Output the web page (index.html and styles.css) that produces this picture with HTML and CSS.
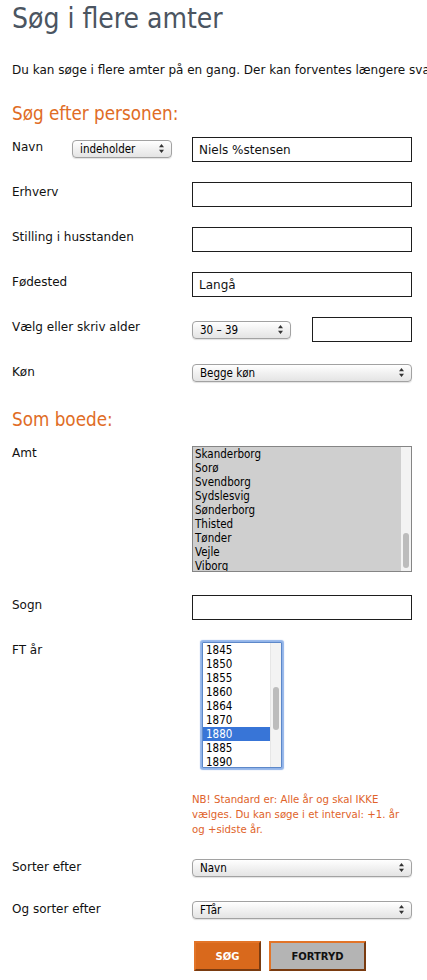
FILE: index.html
```html
<!DOCTYPE html>
<html lang="da">
<head>
<meta charset="utf-8">
<title>Søg i flere amter</title>
<link rel="stylesheet" href="styles.css">
</head>
<body>
<main class="page">
  <h1 class="title">Søg i flere amter</h1>
  <p class="intro">Du kan søge i flere amter på en gang. Der kan forventes længere svartider.</p>

  <h2 class="section section-first">Søg efter personen:</h2>

  <div class="row">
    <div class="lbl lbl-split"><span class="lbl-name">Navn</span>
      <span class="sel-wrap sel-w100"><select class="sel"><option>indeholder</option></select><svg class="arrows" viewBox="0 0 5 9" width="5" height="9"><path d="M2.5 0 L5 3.2 L0 3.2 Z M2.5 9 L5 5.8 L0 5.8 Z" fill="#333"/></svg></span>
    </div>
    <div class="ctrl"><input class="inp" type="text" value="Niels %stensen"></div>
  </div>

  <div class="row">
    <div class="lbl">Erhverv</div>
    <div class="ctrl"><input class="inp" type="text" value=""></div>
  </div>

  <div class="row">
    <div class="lbl">Stilling i husstanden</div>
    <div class="ctrl"><input class="inp" type="text" value=""></div>
  </div>

  <div class="row">
    <div class="lbl">Fødested</div>
    <div class="ctrl"><input class="inp" type="text" value="Langå"></div>
  </div>

  <div class="row">
    <div class="lbl">Vælg eller skriv alder</div>
    <div class="ctrl ctrl-alder">
      <span class="sel-wrap sel-w99"><select class="sel"><option>30 – 39</option></select><svg class="arrows" viewBox="0 0 5 9" width="5" height="9"><path d="M2.5 0 L5 3.2 L0 3.2 Z M2.5 9 L5 5.8 L0 5.8 Z" fill="#333"/></svg></span>
      <input class="inp inp-small" type="text" value="">
    </div>
  </div>

  <div class="row">
    <div class="lbl">Køn</div>
    <div class="ctrl ctrl-sel">
      <span class="sel-wrap sel-w220"><select class="sel"><option>Begge køn</option></select><svg class="arrows" viewBox="0 0 5 9" width="5" height="9"><path d="M2.5 0 L5 3.2 L0 3.2 Z M2.5 9 L5 5.8 L0 5.8 Z" fill="#333"/></svg></span>
    </div>
  </div>

  <h2 class="section section-second">Som boede:</h2>

  <div class="row row-amt">
    <div class="lbl lbl-flush">Amt</div>
    <div class="ctrl ctrl-top">
      <div class="listbox listbox-amt" role="listbox">
        <div class="lb-items">
          <div class="lb-item">Skanderborg</div>
          <div class="lb-item">Sorø</div>
          <div class="lb-item">Svendborg</div>
          <div class="lb-item">Sydslesvig</div>
          <div class="lb-item">Sønderborg</div>
          <div class="lb-item">Thisted</div>
          <div class="lb-item">Tønder</div>
          <div class="lb-item">Vejle</div>
          <div class="lb-item">Viborg</div>
        </div>
        <div class="lb-scroll lb-scroll-amt"><div class="lb-thumb lb-thumb-amt"></div></div>
      </div>
    </div>
  </div>

  <div class="row">
    <div class="lbl">Sogn</div>
    <div class="ctrl"><input class="inp" type="text" value=""></div>
  </div>

  <div class="row">
    <div class="lbl lbl-ft">FT år</div>
    <div class="ctrl ctrl-top ctrl-ft">
      <div class="listbox listbox-ft" role="listbox">
        <div class="lb-items lb-items-ft">
          <div class="lb-item">1845</div>
          <div class="lb-item">1850</div>
          <div class="lb-item">1855</div>
          <div class="lb-item">1860</div>
          <div class="lb-item">1864</div>
          <div class="lb-item">1870</div>
          <div class="lb-item lb-selected">1880</div>
          <div class="lb-item">1885</div>
          <div class="lb-item">1890</div>
        </div>
        <div class="lb-scroll lb-scroll-ft"><div class="lb-thumb lb-thumb-ft"></div></div>
      </div>
      <p class="note">NB! Standard er: Alle år og skal IKKE<br>vælges. Du kan søge i et interval: +1. år<br>og +sidste år.</p>
    </div>
  </div>

  <div class="row">
    <div class="lbl">Sorter efter</div>
    <div class="ctrl ctrl-sel">
      <span class="sel-wrap sel-w220"><select class="sel"><option>Navn</option></select><svg class="arrows" viewBox="0 0 5 9" width="5" height="9"><path d="M2.5 0 L5 3.2 L0 3.2 Z M2.5 9 L5 5.8 L0 5.8 Z" fill="#333"/></svg></span>
    </div>
  </div>

  <div class="row">
    <div class="lbl">Og sorter efter</div>
    <div class="ctrl ctrl-sel">
      <span class="sel-wrap sel-w220"><select class="sel"><option>FTår</option></select><svg class="arrows" viewBox="0 0 5 9" width="5" height="9"><path d="M2.5 0 L5 3.2 L0 3.2 Z M2.5 9 L5 5.8 L0 5.8 Z" fill="#333"/></svg></span>
    </div>
  </div>

  <div class="row row-buttons">
    <div class="lbl"></div>
    <div class="ctrl ctrl-buttons">
      <button class="btn btn-search" type="button">SØG</button>
      <button class="btn btn-cancel" type="button">FORTRYD</button>
    </div>
  </div>
</main>
</body>
</html>
```

FILE: styles.css
```css
html {
  overflow: hidden;
  background: #fff;
}

body {
  margin: 0;
  font-family: "DejaVu Sans", Verdana, sans-serif;
  font-size: 12px;
  color: #1a1a1a;
  background: #fff;
}

.page {
  padding-left: 12px;
  width: 415px;
}

.title {
  margin: 3px 0 0;
  font-family: "DejaVu Sans Condensed", "DejaVu Sans", sans-serif;
  font-stretch: condensed;
  font-weight: normal;
  font-size: 28px;
  line-height: 32px;
  color: #4b5561;
}

.intro {
  margin: 28px 0 0;
  line-height: 14px;
  white-space: nowrap;
  color: #111;
}

.section {
  font-family: "DejaVu Sans Condensed", "DejaVu Sans", sans-serif;
  font-stretch: condensed;
  font-weight: normal;
  font-size: 18.7px;
  line-height: 22px;
  color: #e06c25;
}

.section-first {
  margin: 26px 0 12px;
}

.section-second {
  margin: 25px 0 15px;
}

/* form rows */
.row {
  display: grid;
  grid-template-columns: 180px 220px;
  margin-bottom: 20px;
}

.lbl {
  padding-top: 3px;
  line-height: 14px;
  color: #111;
}

.lbl-flush {
  padding-top: 0;
}

.lbl-split {
  display: flex;
  align-items: flex-start;
  padding-top: 0;
}

.lbl-name {
  width: 60px;
  padding-top: 3px;
}

.lbl-split .sel-wrap {
  margin-top: 3px;
}

.ctrl {
  display: flex;
  align-items: center;
  min-height: 25px;
}

.ctrl-sel {
  min-height: 22px;
}

.ctrl-top {
  align-items: flex-start;
  flex-direction: column;
}

.ctrl-alder {
  gap: 21px;
}

.row-amt {
  margin-bottom: 23px;
}

/* text inputs */
.inp {
  box-sizing: border-box;
  width: 220px;
  height: 25px;
  margin: 0;
  padding: 0 6px;
  border: 1px solid #1e1e1e;
  border-radius: 0;
  background: #fff;
  font-family: "DejaVu Sans", Verdana, sans-serif;
  font-size: 12px;
  color: #111;
  outline: none;
}

.inp-small {
  width: 100px;
}

/* select boxes */
.sel-wrap {
  position: relative;
  display: inline-flex;
}

.sel-w100 { width: 100px; }
.sel-w99 { width: 99px; }
.sel-w220 { width: 220px; }

.sel {
  -webkit-appearance: none;
  appearance: none;
  box-sizing: border-box;
  width: 100%;
  height: 18px;
  margin: 0;
  padding: 0 16px 0 7px;
  border: 1px solid #a2a2a2;
  border-radius: 4px;
  background: linear-gradient(#ffffff, #f1f1f1 50%, #e4e4e4);
  box-shadow: 0 1px 1px rgba(0, 0, 0, 0.12);
  font-family: "DejaVu Sans Condensed", "DejaVu Sans", sans-serif;
  font-stretch: condensed;
  font-size: 11.5px;
  color: #000;
  outline: none;
}

.arrows {
  position: absolute;
  right: 8px;
  top: 4px;
  pointer-events: none;
}

/* list boxes */
.listbox {
  box-sizing: border-box;
  display: flex;
  height: 126px;
  overflow: hidden;
  font-family: "DejaVu Sans Condensed", "DejaVu Sans", sans-serif;
  font-stretch: condensed;
  font-size: 11.5px;
  line-height: 14px;
  color: #000;
}

.listbox-amt {
  width: 220px;
  border: 1px solid #858585;
  background: #cfcfcf;
}

.lb-items {
  flex: 1;
  padding-left: 2px;
}

.lb-item {
  height: 14px;
  white-space: nowrap;
}

.lb-scroll {
  display: flex;
  justify-content: center;
  background: #f3f3f3;
}

.lb-scroll-amt {
  width: 10px;
  padding-top: 86px;
  box-sizing: border-box;
}

.lb-thumb {
  width: 6px;
  border-radius: 3px;
  background: #bcbcbc;
}

.lb-thumb-amt {
  height: 35px;
}

.ctrl-ft {
  padding-top: 2px;
}

.listbox-ft {
  width: 80px;
  margin-left: 10px;
  border: 1px solid #5d88c9;
  background: #fff;
  box-shadow: 0 0 1px 2px rgba(110, 155, 225, 0.75);
  border-radius: 1px;
}

.lb-items-ft {
  padding-left: 0;
}

.lb-items-ft .lb-item {
  padding-left: 3px;
}

.lb-selected {
  background: #3875d7;
  color: #fff;
}

.lb-scroll-ft {
  width: 11px;
  padding-top: 44px;
  box-sizing: border-box;
  border-left: 1px solid #e6e6e6;
}

.lb-thumb-ft {
  height: 43px;
}

.lbl-ft {
  padding-top: 3px;
}

.note {
  margin: 24px 0 0;
  font-size: 10.2px;
  line-height: 15px;
  color: #e0632a;
  white-space: nowrap;
}

/* buttons */
.ctrl-buttons {
  gap: 8px;
  padding-left: 2px;
}

.btn {
  box-sizing: border-box;
  height: 30px;
  margin: 0;
  padding: 0;
  border: 2px solid;
  border-color: #e27428 #7a3b10 #7a3b10 #e27428;
  font-family: "DejaVu Sans", Verdana, sans-serif;
  font-weight: bold;
  font-size: 10px;
  cursor: pointer;
}

.btn-search {
  width: 67px;
  background: #d9691c;
  color: #fff;
}

.btn-cancel {
  width: 97px;
  background: #b4b4b4;
  color: #111;
}
```
